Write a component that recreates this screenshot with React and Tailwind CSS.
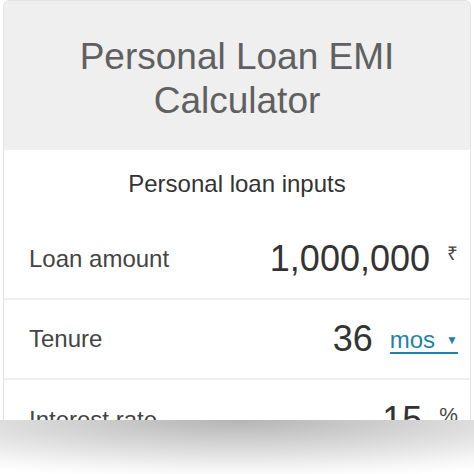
import React from 'react';

function Row({ label, value, unit, last }) {
  return (
    <div className={`flex shrink-0 items-center justify-between h-[80px] pl-[25px] pr-[12px] ${last ? '' : 'border-b-2 border-[#eeeeee]'}`}>
      <span className="text-[24px] text-[#444444] leading-none">{label}</span>
      <div className="flex items-start gap-[17px]">
        <span className="text-[36px] text-[#333333] leading-none">{value}</span>
        {unit}
      </div>
    </div>
  );
}

export default function App() {
  return (
    <div className="h-[474px] w-[474px] overflow-hidden bg-white flex flex-col" style={{ fontFamily: '"Liberation Sans", Arial, sans-serif' }}>
      <div className="mx-[3px] h-[420px] overflow-hidden rounded-t-[6px] border-x border-t border-[#e4e4e4] bg-white flex flex-col shrink-0">
        <div className="h-[149px] shrink-0 bg-[#efefef] pt-[34px] text-center text-[37px] leading-[44px] text-[#606060]">
          Personal Loan EMI<br />Calculator
        </div>
        <div className="h-[70px] shrink-0 pt-[19px] text-center text-[24px] leading-[30px] text-[#333333]">
          Personal loan inputs
        </div>
        <Row
          label="Loan amount"
          value="1,000,000"
          unit={<span className="mt-[3px] text-[19px] leading-none text-[#444444]">₹</span>}
        />
        <Row
          label="Tenure"
          value="36"
          unit={
            <span className="mt-[7px] flex items-center gap-[11px] border-b-2 border-[#1f82ab] pb-[1px] text-[24px] leading-[23px] text-[#1f82ab]">
              mos<span className="text-[12px] leading-none">▼</span>
            </span>
          }
        />
        <Row
          label="Interest rate"
          value="15"
          unit={<span className="mt-[2px] text-[21px] leading-none text-[#444444]">%</span>}
          last
        />
      </div>
      <div className="flex-1 bg-[radial-gradient(ellipse_95%_110%_at_50%_0%,#b4b4b4,#f7f7f7_85%,#ffffff)]" />
    </div>
  );
}
